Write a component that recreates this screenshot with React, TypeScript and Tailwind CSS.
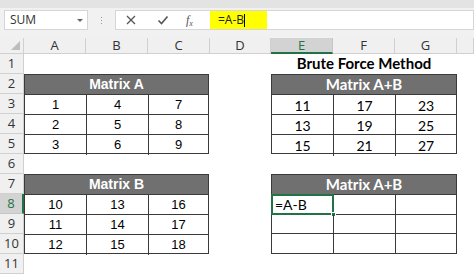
import React from "react";

const cols = ["A", "B", "C", "D", "E", "F", "G", ""];
const rows = [1, 2, 3, 4, 5, 6, 7, 8, 9, 10, 11];

const matA = [
    [1, 4, 7],
    [2, 5, 8],
    [3, 6, 9],
];
const matB = [
    [10, 13, 16],
    [11, 14, 17],
    [12, 15, 18],
];
const matSum = [
    [11, 17, 23],
    [13, 19, 25],
    [15, 21, 27],
];

const Matrix: React.FC<{ title: string; data: (number | string)[][]; calibri?: boolean; className: string; selected?: boolean }> = ({ title, data, calibri, className, selected }) => {
    const font = calibri ? "font-['Lato',sans-serif] text-[14px]" : "font-['Liberation_Sans',Arial,sans-serif] text-[13px]";
    return (
        <div className={`${className} flex flex-col border border-[#3a3a3a] ${font} text-black`}>
            <div className={`h-[20px] bg-[#707070] text-white font-bold flex items-center justify-center border-b border-[#3a3a3a] ${calibri ? "text-[15px]" : "text-[14px]"}`}>
                {title}
            </div>
            {data.map((r, i) => (
                <div key={i} className="grid grid-cols-[62px_62px_1fr] h-[20px] border-b border-[#3a3a3a] last:border-b-0 last:h-[19px]">
                    {r.map((v, j) => (
                        <div key={j} className="relative flex items-center justify-center border-r border-[#3a3a3a] last:border-r-0">
                            {selected && i === 0 && j === 0 ? (
                                <div className="absolute left-[-1px] top-[-1px] w-[63px] h-[21px] border-2 border-[#217346] flex items-center pl-[2px] text-[14px]">
                                    =A-B
                                    <span className="absolute right-[-4px] bottom-[-4px] w-[5px] h-[5px] bg-[#217346] border border-white" />
                                </div>
                            ) : (
                                v
                            )}
                        </div>
                    ))}
                </div>
            ))}
        </div>
    );
};

export default function App() {
    return (
        <div className="w-[474px] h-[275px] overflow-hidden bg-white font-['Open_Sans',sans-serif]">
            {/* toolbar */}
            <div className="h-[38px] bg-[#f1f1f1] flex flex-col">
                <div className="h-[8px] bg-[#e3e3e3]" />
                <div className="flex items-start pt-[2px]">
                    <div className="ml-[4px] w-[84px] h-[20px] bg-white border border-[#d6d6d6] flex items-center justify-between pl-[5px] pr-[4px] text-[12px] text-[#333]">
                        <span>SUM</span>
                        <span className="w-0 h-0 border-l-[3px] border-r-[3px] border-t-[3px] border-l-transparent border-r-transparent border-t-[#666]" />
                    </div>
                    <div className="w-[27px] h-[20px] flex flex-col items-center justify-center gap-[2px]">
                        <span className="w-[1px] h-[1px] bg-[#999]" />
                        <span className="w-[1px] h-[1px] bg-[#999]" />
                        <span className="w-[1px] h-[1px] bg-[#999]" />
                    </div>
                    <div className="w-[95px] h-[20px] bg-white border border-[#d6d6d6] border-r-0 flex items-center text-[#666]">
                        <svg width="12" height="12" viewBox="0 0 12 12" className="ml-[9px]">
                            <path d="M2 2L10 10M10 2L2 10" stroke="#555" strokeWidth="1.3" />
                        </svg>
                        <svg width="12" height="12" viewBox="0 0 12 12" className="ml-[20px]">
                            <path d="M1.5 6.5L4.5 9.5L10.5 2.5" stroke="#555" strokeWidth="1.6" fill="none" />
                        </svg>
                        <span className="ml-[17px] italic font-['Liberation_Serif',serif] text-[12px] text-[#555]">
                            f<sub className="text-[8px]">x</sub>
                        </span>
                    </div>
                    <div className="flex-1 h-[20px] bg-white border border-[#d6d6d6] border-l-0 flex">
                        <div className="w-[57px] h-full bg-[#ffff00] flex items-center pl-[8px] text-[12px] text-[#222]">
                            =A-B<span className="w-[1px] h-[13px] bg-black" />
                        </div>
                    </div>
                </div>
            </div>

            {/* sheet */}
            <div className="grid grid-cols-[24px_62px_62px_62px_61px_62px_62px_62px_1fr] grid-rows-[16px_repeat(11,20px)] text-[13px] text-[#333]">
                <div className="bg-[#f0f0f0] border-r border-b border-[#d0d0d0] relative">
                    <span className="absolute right-[3px] bottom-[3px] w-0 h-0 border-b-[9px] border-l-[9px] border-b-[#bdbdbd] border-l-transparent" />
                </div>
                {cols.map((c, i) =>
                    c === "E" ? (
                        <div key={i} className="bg-[#d3d3d3] border-r border-[#c6c6c6] border-b-2 border-b-[#217346] flex items-center justify-center text-[#217346] leading-none">
                            {c}
                        </div>
                    ) : (
                        <div key={i} className="bg-[#f0f0f0] border-r border-b border-[#d0d0d0] flex items-center justify-center leading-none">
                            {c}
                        </div>
                    )
                )}

                {rows.map((r) => (
                    <div
                        key={r}
                        style={{ gridRow: r + 1, gridColumn: 1 }}
                        className={
                            r === 8
                                ? "bg-[#d3d3d3] border-r-2 border-r-[#217346] border-b border-b-[#c6c6c6] flex items-center justify-center text-[#217346]"
                                : "bg-[#f0f0f0] border-r border-b border-[#d0d0d0] flex items-center justify-center"
                        }
                    >
                        {r}
                    </div>
                ))}

                <div className="col-start-6 col-span-3 row-start-2 flex justify-center items-start font-['Lato',sans-serif] font-bold text-[15px] text-black leading-none pt-[2px]">
                    Brute Force Method
                </div>

                <Matrix className="col-start-2 col-span-3 row-start-3 row-span-4 mr-[1px]" title="Matrix A" data={matA} />
                <Matrix className="col-start-6 col-span-3 row-start-3 row-span-4" title="Matrix A+B" data={matSum} calibri />
                <Matrix className="col-start-2 col-span-3 row-start-8 row-span-4 mr-[1px]" title="Matrix B" data={matB} />
                <Matrix className="col-start-6 col-span-3 row-start-8 row-span-4" title="Matrix A+B" data={[["", "", ""], ["", "", ""], ["", "", ""]]} calibri selected />
            </div>
        </div>
    );
}
